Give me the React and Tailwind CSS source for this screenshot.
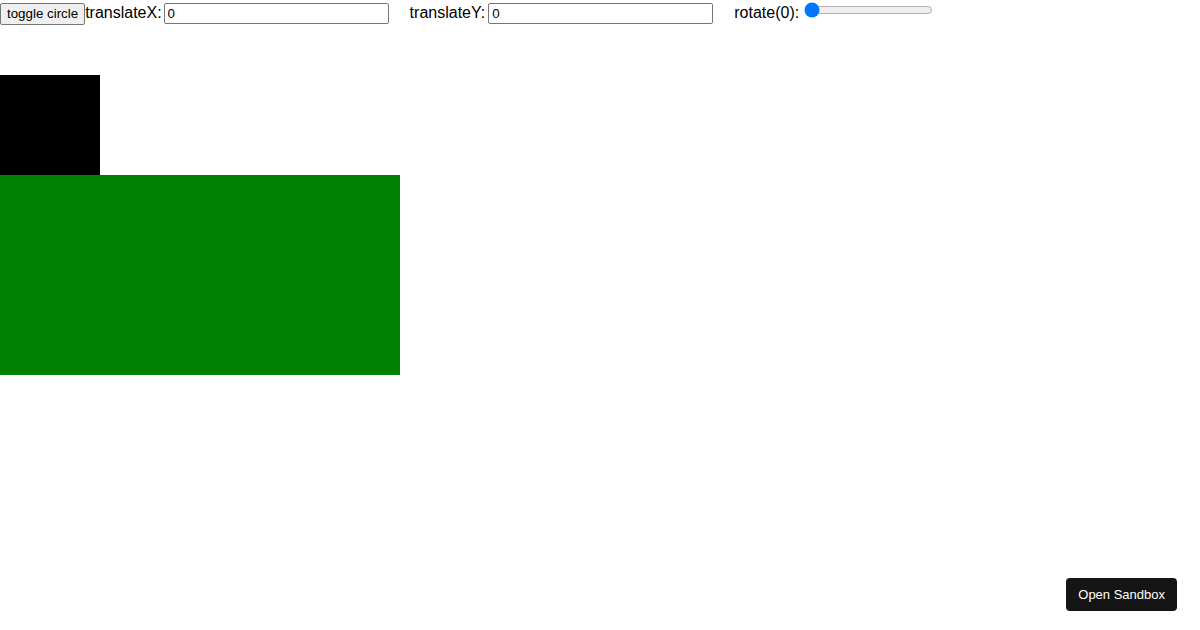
import { useState } from 'react'

const App = () => {
  const [showCircle, setShowCircle] = useState(false)
  const [x, setX] = useState('0')
  const [y, setY] = useState('0')
  const [rotate, setRotate] = useState(0)

  return (
    <div className="relative w-[1200px] h-[630px] bg-white font-['Liberation_Sans',Arial,sans-serif] text-black">
      <div className="flex items-start h-[75px]">
        <button
          onClick={() => setShowCircle(!showCircle)}
          className="mt-[3px] h-[22px] px-[6px] text-[13.33px] bg-[#efefef] border border-[#767676] rounded-[2px] leading-none"
        >
          toggle circle
        </button>
        <label className="flex items-start mr-[21px]">
          <span className="text-[16px] leading-[18px] mt-[4px] mr-[2px]">translateX:</span>
          <input
            type="text"
            value={x}
            onChange={(e) => setX(e.target.value)}
            className="mt-[3px] w-[225px] h-[21px] px-[3px] text-[13.33px] border border-[#767676] rounded-[2px] outline-none"
          />
        </label>
        <label className="flex items-start mr-[21px]">
          <span className="text-[16px] leading-[18px] mt-[4px] mr-[3px]">translateY:</span>
          <input
            type="text"
            value={y}
            onChange={(e) => setY(e.target.value)}
            className="mt-[3px] w-[225px] h-[21px] px-[3px] text-[13.33px] border border-[#767676] rounded-[2px] outline-none"
          />
        </label>
        <label className="flex items-start">
          <span className="text-[16px] leading-[18px] mt-[4px] mr-[5px]">rotate({rotate}):</span>
          <input
            type="range"
            min="0"
            max="360"
            value={rotate}
            onChange={(e) => setRotate(Number(e.target.value))}
            className="mt-[2px] w-[129px] h-[16px] accent-[#0075ff]"
          />
        </label>
      </div>

      <div className="w-[100px] h-[100px] bg-black"></div>
      <div className="w-[400px] h-[200px] bg-[#008000]"></div>

      <button className="absolute right-[23px] bottom-[19px] h-[33px] px-[12px] rounded-[4px] bg-[#151515] text-[13px] text-white">
        Open Sandbox
      </button>
    </div>
  )
}

export default App
